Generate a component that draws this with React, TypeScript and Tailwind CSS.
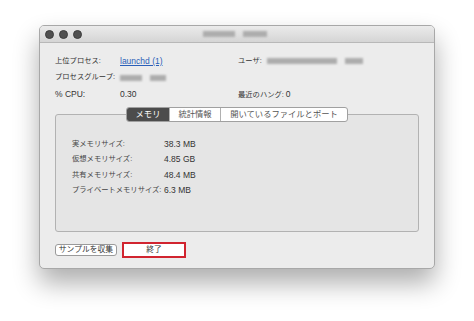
import React from "react";

const font = { fontFamily: '"Liberation Sans", "Noto Sans CJK JP", sans-serif' };

const Blur = ({ w }: { w: number[] }) => (
  <div className="flex items-center gap-[8px] blur-[1px]">
    {w.map((x, i) => (
      <div key={i} className="h-[6px] bg-[#adadad]" style={{ width: x }} />
    ))}
  </div>
);

const memory = [
  ["実メモリサイズ:", "38.3 MB"],
  ["仮想メモリサイズ:", "4.85 GB"],
  ["共有メモリサイズ:", "48.4 MB"],
  ["プライベートメモリサイズ:", "6.3 MB"],
];

export default function App() {
  return (
    <div className="w-[474px] h-[321px] bg-white pt-[25px] pl-[39px] text-[7.3px] text-[#333] whitespace-nowrap" style={font}>
      <div className="w-[396px] h-[244px] rounded-[5px] border border-[#a8a8a8] bg-[#ececec] shadow-[0_14px_26px_rgba(0,0,0,0.32)] flex flex-col overflow-hidden">
        {/* title bar */}
        <div className="relative h-[17px] flex items-center gap-[5px] pl-[5px] bg-gradient-to-b from-[#ebebeb] to-[#d5d5d5] border-b border-[#b8b8b8]">
          <div className="w-[9px] h-[9px] rounded-full bg-[#505050] border border-[#3e3e3e]" />
          <div className="w-[9px] h-[9px] rounded-full bg-[#505050] border border-[#3e3e3e]" />
          <div className="w-[9px] h-[9px] rounded-full bg-[#505050] border border-[#3e3e3e]" />
          <div className="absolute left-[163px] top-[5px]">
            <Blur w={[32, 24]} />
          </div>
        </div>

        <div className="flex-1 px-[15px] pt-[10px]">
          {/* info */}
          <div className="grid grid-cols-[65px_118px_1fr] auto-rows-[16.5px] items-center">
            <span>上位プロセス:</span>
            <span className="text-[8.5px] text-[#2b5fb8] underline">launchd (1)</span>
            <div className="flex items-center gap-[5px]">
              <span>ユーザ:</span>
              <Blur w={[70, 18]} />
            </div>
            <span>プロセスグループ:</span>
            <Blur w={[22, 16]} />
            <span />
            <span className="text-[8.5px]">% CPU:</span>
            <span className="text-[8.5px]">0.30</span>
            <span>
              最近のハング: <span className="text-[8.5px]">0</span>
            </span>
          </div>

          {/* tabs */}
          <div className="mt-[4px] flex justify-center relative z-10">
            <div className="flex h-[15px] rounded-[3px] border border-[#a0a0a0] bg-white overflow-hidden text-[8.3px]">
              <div className="w-[42px] flex items-center justify-center bg-[#4c4c4c] text-white">メモリ</div>
              <div className="w-[51px] flex items-center justify-center border-l border-[#b0b0b0] text-[#555]">統計情報</div>
              <div className="w-[127px] flex items-center justify-center border-l border-[#b0b0b0] text-[#555]">開いているファイルとポート</div>
            </div>
          </div>

          {/* memory box */}
          <div className="-mt-[8px] h-[118px] rounded-[3px] border border-[#b2b2b2] bg-[#e5e5e5] pl-[16px] pt-[22px]">
            {memory.map(([k, v]) => (
              <div key={k} className="flex items-center h-[15.5px]">
                <span className="w-[92px] text-[#444]">{k}</span>
                <span className="text-[8.5px]">{v}</span>
              </div>
            ))}
          </div>

          {/* buttons */}
          <div className="mt-[10px] flex items-center gap-[5px] h-[16px] text-[7.8px]">
            <div className="w-[62px] h-[12px] flex items-center justify-center rounded-[3px] border border-[#9a9a9a] bg-white">サンプルを収集</div>
            <div className="w-[64px] h-[16px] flex items-center justify-center border-2 border-[#d1242f] bg-white">終了</div>
          </div>
        </div>
      </div>
    </div>
  );
}
